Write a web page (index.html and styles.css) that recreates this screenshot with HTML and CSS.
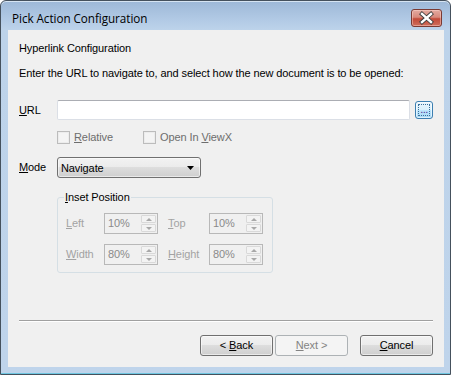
FILE: index.html
```html
<!DOCTYPE html>
<html>
<head>
<meta charset="utf-8">
<title>Pick Action Configuration</title>
<link rel="stylesheet" href="styles.css">
</head>
<body>
<div class="window">
  <div class="titlebar">
    <span class="title">Pick Action Configuration</span>
    <div class="close">
      <svg width="29" height="16" viewBox="0 0 29 16">
        <path d="M10 4 L19 12 M19 4 L10 12" stroke="#3b3b3b" stroke-width="4.2" stroke-linecap="square"/>
        <path d="M10 4 L19 12 M19 4 L10 12" stroke="#ffffff" stroke-width="2.4" stroke-linecap="square"/>
      </svg>
    </div>
  </div>
  <div class="client">
    <div class="heading">Hyperlink Configuration</div>
    <div class="intro">Enter the URL to navigate to, and select how the new document is to be opened:</div>
    <div class="url-row">
      <span class="lbl"><u>U</u>RL</span>
      <div class="textbox"></div>
      <div class="browse"><span class="focus">...</span></div>
    </div>
    <div class="check-row">
      <div class="check first"><span class="box"></span><span class="dis"><u>R</u>elative</span></div>
      <div class="check"><span class="box"></span><span class="dis">Open In <u>V</u>iewX</span></div>
    </div>
    <div class="mode-row">
      <span class="lbl"><u>M</u>ode</span>
      <div class="combo">
        <span class="combo-text">Navigate</span>
        <svg class="arrow" width="7" height="4" viewBox="0 0 7 4"><path d="M0 0 H7 L3.5 4 Z" fill="#000"/></svg>
      </div>
    </div>
    <fieldset class="group">
      <legend><u>I</u>nset Position</legend>
      <div class="grid">
        <span class="glbl"><u>L</u>eft</span>
        <div class="spin"><span class="val">10%</span><div class="arrows"><span class="up"></span><span class="down"></span></div></div>
        <span></span>
        <span class="glbl"><u>T</u>op</span>
        <div class="spin"><span class="val">10%</span><div class="arrows"><span class="up"></span><span class="down"></span></div></div>
        <span class="glbl"><u>W</u>idth</span>
        <div class="spin"><span class="val">80%</span><div class="arrows"><span class="up"></span><span class="down"></span></div></div>
        <span></span>
        <span class="glbl"><u>H</u>eight</span>
        <div class="spin"><span class="val">80%</span><div class="arrows"><span class="up"></span><span class="down"></span></div></div>
      </div>
    </fieldset>
    <div class="footer">
      <div class="sep"></div>
      <div class="buttons">
        <div class="btn"><span>&lt; <u>B</u>ack</span></div>
        <div class="btn disabled next"><span><u>N</u>ext &gt;</span></div>
        <div class="btn cancel"><span><u>C</u>ancel</span></div>
      </div>
    </div>
  </div>
</div>
</body>
</html>
```
FILE: styles.css
```css
* { box-sizing: border-box; }
html, body { margin: 0; padding: 0; }
body {
  width: 451px;
  height: 375px;
  overflow: hidden;
  background: #ffffff;
  font-family: "Liberation Sans", Arial, sans-serif;
  font-size: 11px;
  letter-spacing: -0.1px;
  color: #000;
}
u { text-decoration: underline; text-underline-offset: 1px; }

.window {
  width: 451px;
  height: 375px;
  border: 1px solid #45515d;
  border-radius: 6px 6px 0 0;
  background: linear-gradient(#9db8d7 0px, #b3cbe6 20px, #bdd3ea 29px, #bfd4eb 100%);
  box-shadow: inset 0 -1px 0 #6fc6e0, inset 0 1px 0 #d6e4f2;
  display: flex;
  flex-direction: column;
}

.titlebar {
  height: 29px;
  display: flex;
  justify-content: space-between;
  align-items: flex-start;
  padding: 0 8px 0 11px;
}
.title {
  font-family: "Open Sans", "Noto Sans", sans-serif;
  font-size: 11.7px;
  letter-spacing: -0.05px;
  line-height: 16px;
  margin-top: 9px;
  color: #000;
}
.close {
  width: 31px;
  height: 18px;
  margin-top: 8px;
  border: 1px solid #7a3a33;
  border-radius: 3px;
  background: linear-gradient(#e3aaa0 0%, #d88a7d 45%, #c24a39 55%, #cf6e5c 100%);
  box-shadow: inset 0 0 0 1px rgba(255,220,210,0.45);
  display: flex;
  align-items: center;
  justify-content: center;
}

.client {
  flex: 1;
  margin: 0 6px 7px 7px;
  background: #f0f0f0;
  display: flex;
  flex-direction: column;
  padding: 0 11px 11px 11px;
}

.heading { margin-top: 12px; line-height: 13px; height: 13px; }
.intro { margin-top: 12px; line-height: 13px; height: 13px; }

.url-row {
  margin-top: 20px;
  height: 20px;
  display: flex;
  align-items: center;
}
.lbl { width: 38px; line-height: 13px; }
.textbox {
  width: 353px;
  height: 20px;
  background: #fff;
  border: 1px solid #dbdfe6;
  border-top-color: #abadb3;
  border-radius: 2px;
}
.browse {
  margin-left: 5px;
  width: 18px;
  height: 18px;
  border: 1px solid #3c7fb1;
  border-radius: 3px;
  background: linear-gradient(#eaf6fd 0%, #d9f0fc 50%, #bee6fd 50%, #a7d9f5 100%);
  box-shadow: inset 0 0 0 1px rgba(255,255,255,0.6);
  padding: 2px;
  display: flex;
}
.focus {
  flex: 1;
  border: 1px dotted #3a6f9a;
  font-size: 11px;
  line-height: 10px;
  color: #4b2f8f;
  display: flex;
  align-items: flex-end;
  justify-content: center;
  letter-spacing: -0.5px;
  padding-bottom: 1px;
}

.check-row {
  margin-top: 11px;
  height: 13px;
  padding-left: 38px;
  display: flex;
  align-items: center;
}
.check { display: flex; align-items: center; gap: 4px; }
.check.first { width: 86px; }
.box {
  width: 13px;
  height: 13px;
  border: 1px solid #bcbcbc;
  background: #f4f4f4;
  box-shadow: inset 0 0 0 1px #ececec;
}
.dis { color: #6d6d6d; line-height: 13px; }

.mode-row {
  margin-top: 13px;
  height: 21px;
  display: flex;
  align-items: center;
}
.combo {
  width: 144px;
  height: 21px;
  border: 1px solid #707070;
  border-radius: 3px;
  background: linear-gradient(#f2f2f2 0%, #ebebeb 50%, #dddddd 50%, #cfcfcf 100%);
  box-shadow: inset 0 0 0 1px rgba(255,255,255,0.55);
  display: flex;
  align-items: center;
  justify-content: space-between;
  padding: 0 6px 0 3px;
}
.arrow { display: block; }

.group {
  margin: 13px 0 0 38px;
  width: 216px;
  border: 1px solid #d5dfe5;
  border-radius: 3px;
  padding: 0 8px 7px 8px;
  min-width: 0;
}
.group legend {
  padding: 0 1px;
  margin-left: -2px;
  line-height: 13px;
}
.grid {
  margin-top: 9px;
  display: grid;
  grid-template-columns: 38px 54px 10px 41px 54px;
  grid-auto-rows: 21px;
  row-gap: 10px;
  align-items: center;
}
.glbl { color: #a3a3a3; line-height: 13px; }
.spin {
  height: 21px;
  border: 1px solid #b8b8b8;
  background: #f0f0f0;
  display: flex;
  align-items: stretch;
  padding: 1px;
}
.val { flex: 1; color: #8a8a8a; padding-left: 2px; line-height: 17px; }
.arrows {
  width: 15px;
  display: flex;
  flex-direction: column;
  gap: 1px;
}
.up, .down {
  flex: 1;
  border: 1px solid #d9d9d9;
  border-radius: 1px;
  background: #f3f3f3;
  display: flex;
  align-items: center;
  justify-content: center;
}
.up::after, .down::after {
  content: "";
  width: 0;
  height: 0;
  border-left: 3px solid transparent;
  border-right: 3px solid transparent;
}
.up::after { border-bottom: 3px solid #a8a8a8; }
.down::after { border-top: 3px solid #a8a8a8; }

.footer {
  margin-top: auto;
  display: flex;
  flex-direction: column;
}
.sep {
  height: 2px;
  border-top: 1px solid #a0a0a0;
  border-bottom: 1px solid #ffffff;
}
.buttons {
  margin-top: 13px;
  display: flex;
  justify-content: flex-end;
}
.btn {
  width: 73px;
  height: 21px;
  border: 1px solid #707070;
  border-radius: 3px;
  background: linear-gradient(#f2f2f2 0%, #ebebeb 50%, #dddddd 50%, #cfcfcf 100%);
  box-shadow: inset 0 0 0 1px rgba(255,255,255,0.55);
  display: flex;
  align-items: center;
  justify-content: center;
  line-height: 13px;
}
.btn.next { margin-left: 2px; }
.btn.cancel { margin-left: 12px; }
.btn.disabled {
  border-color: #adb2b5;
  background: #f4f4f4;
  box-shadow: none;
  color: #838383;
}
```
